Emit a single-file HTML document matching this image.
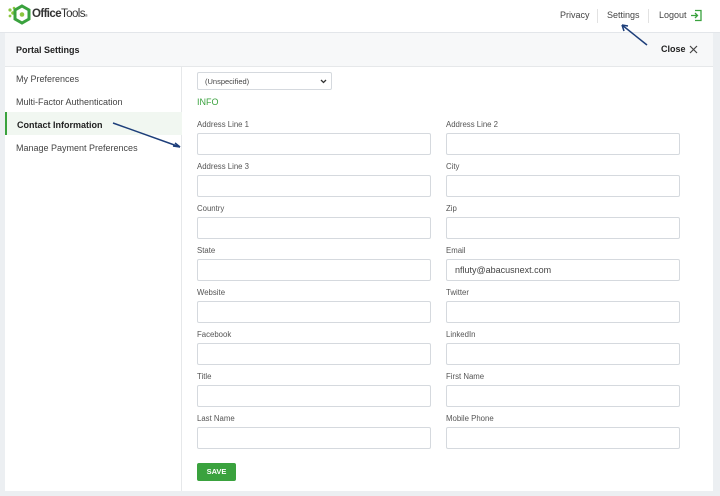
<!DOCTYPE html>
<html><head><meta charset="utf-8"><style>
*{box-sizing:border-box;margin:0;padding:0}
body{width:720px;height:496px;background:#eceff2;font-family:"Liberation Sans",sans-serif;position:relative;overflow:hidden;color:#333}
.a{position:absolute}
.hdr{left:0;top:0;width:720px;height:33px;background:#fff;border-bottom:1px solid #e3e6ea}
.nav{font-size:9px;color:#444;top:10px}
.panel{left:5px;top:33px;width:708px;height:458px;background:#fff}
.ph{left:0;top:0;width:708px;height:34px;background:#f7f8f9;border-bottom:1px solid #e6e8ea}
.side{left:0;top:34px;width:177px;height:424px;border-right:1px solid #e6e8ea}
.si{position:absolute;left:11px;font-size:9px;color:#444}
.lbl{font-size:7.8px;color:#555}
.in{width:234px;height:22px;border:1px solid #d5d9de;border-radius:2px;background:#fff}
</style></head><body>
<div class="a hdr">
<svg class="a" style="left:7px;top:4px" width="26" height="22" viewBox="0 0 26 22">
<circle cx="3" cy="6" r="1.6" fill="#8cc63f"/><circle cx="6" cy="9" r="1.8" fill="#8cc63f"/><circle cx="3" cy="12" r="1.4" fill="#8cc63f"/><circle cx="7" cy="4" r="1.3" fill="#8cc63f"/>
<polygon points="15,2 22,6 22,15 15,19 8,15 8,6" fill="none" stroke="#3aa23e" stroke-width="3"/><circle cx="15" cy="10.5" r="2.3" fill="#8cc63f"/>
</svg>
<div class="a" style="left:32px;top:8px;font-size:11.5px;letter-spacing:-0.6px;color:#333"><b>Office</b>Tools<span style="font-size:4px">®</span></div>
<div class="a nav" style="left:560px">Privacy</div>
<div class="a" style="left:597px;top:9px;width:1px;height:14px;background:#e2e2e2"></div>
<div class="a nav" style="left:607px">Settings</div>
<div class="a" style="left:648px;top:9px;width:1px;height:14px;background:#e2e2e2"></div>
<div class="a nav" style="left:659px">Logout</div>
<svg class="a" style="left:690px;top:9px" width="13" height="13" viewBox="0 0 13 13" fill="none" stroke="#3aa23e" stroke-width="1.3"><path d="M5 1.5h6v10H5"/><path d="M1 6.5h6M5 4l2.5 2.5L5 9"/></svg>
</div>
<div class="a panel">
<div class="a ph"><div class="a" style="left:11px;top:12px;font-size:9px;font-weight:bold;color:#222">Portal Settings</div>
<div class="a" style="left:656px;top:11px;font-size:9px;font-weight:bold;color:#222">Close</div>
<svg class="a" style="left:684px;top:12px" width="9" height="9" viewBox="0 0 9 9" stroke="#444" stroke-width="1.2"><path d="M1 1l7 7M8 1L1 8"/></svg></div>
<div class="a side">
<div class="si" style="top:7px">My Preferences</div>
<div class="si" style="top:30px">Multi-Factor Authentication</div>
<div class="a" style="left:0;top:45px;width:177px;height:23px;background:#f1f7f1;border-left:2px solid #3aa23e"></div>
<div class="si" style="top:53px;left:12px;font-weight:bold;color:#222">Contact Information</div>
<div class="si" style="top:76px">Manage Payment Preferences</div>
</div>
<div class="a" style="left:192px;top:39px;width:135px;height:18px;border:1px solid #d5d9de;border-radius:2px;font-size:7.5px;padding:4px 0 0 7px;color:#444">(Unspecified)
<svg class="a" style="left:122px;top:6px" width="7" height="5" viewBox="0 0 7 5"><path d="M1 1l2.5 2.5L6 1" fill="none" stroke="#333" stroke-width="1.3"/></svg></div>
<div class="a" style="left:192px;top:64px;font-size:9px;color:#3aa23e">INFO</div>
</div>
<div id="f"></div>
<div class="a" style="left:197px;top:463px;width:39px;height:18px;background:#3aa23e;border-radius:2px;color:#fff;font-size:7.5px;font-weight:bold;text-align:center;line-height:18px">SAVE</div>
<svg class="a" style="left:0;top:0" width="720" height="496" fill="none" stroke="#1d3e7a" stroke-width="1.5">
<path d="M113 123L180 147"/><path d="M180 147l-7-1M180 147l-5-4" />
<path d="M647 45L622 25"/><path d="M622 25l2 6M622 25l6 1"/>
</svg>
<script>
var L=[["Address Line 1","Address Line 2"],["Address Line 3","City"],["Country","Zip"],["State","Email"],["Website","Twitter"],["Facebook","LinkedIn"],["Title","First Name"],["Last Name","Mobile Phone"]],h="";
L.forEach(function(r,i){var y=120+i*42;[197,446].forEach(function(x,j){h+='<div class="a lbl" style="left:'+x+'px;top:'+y+'px">'+r[j]+'</div><div class="a in" style="left:'+x+'px;top:'+(y+13)+'px">'+(r[j]=="Email"?'<div style="font-size:9px;color:#444;padding:5px 0 0 8px">nfluty@abacusnext.com</div>':'')+'</div>';});});
document.getElementById("f").innerHTML=h;
</script>
</body></html>
